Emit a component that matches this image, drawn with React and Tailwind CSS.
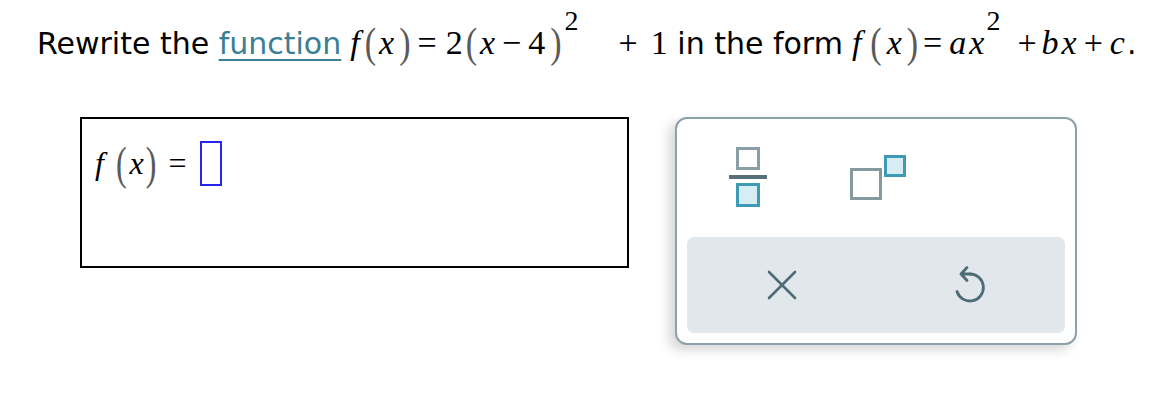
function FractionIcon() {
  return (
    <svg width="40" height="62" viewBox="0 0 40 62">
      <rect x="8.5" y="1.5" width="21" height="20" fill="#fff" stroke="#8a9ea6" strokeWidth="3" />
      <rect x="0" y="28" width="38" height="4" fill="#56707a" />
      <rect x="8.5" y="37.5" width="21" height="21" fill="#d6edf3" stroke="#3f9bb5" strokeWidth="3" />
    </svg>
  );
}

function SuperscriptIcon() {
  return (
    <svg width="58" height="46" viewBox="0 0 58 46">
      <rect x="1.5" y="14.5" width="29" height="29" fill="#fff" stroke="#86999f" strokeWidth="3" />
      <rect x="35.5" y="1.5" width="19" height="19" fill="#d6edf3" stroke="#3f9bb5" strokeWidth="3" />
    </svg>
  );
}

function ClearIcon() {
  return (
    <svg width="30" height="30" viewBox="0 0 30 30">
      <path d="M2 2 L28 28 M28 2 L2 28" stroke="#4c6c77" strokeWidth="2.6" strokeLinecap="round" />
    </svg>
  );
}

function UndoIcon() {
  return (
    <svg width="34" height="40" viewBox="0 0 34 40">
      <path
        d="M16 9 A13.5 13.5 0 1 1 3 26.5"
        fill="none"
        stroke="#4c6c77"
        strokeWidth="2.8"
        strokeLinecap="round"
      />
      <path
        d="M13 2.5 L7 9 L13 15.5 M7 9 L16 9"
        fill="none"
        stroke="#4c6c77"
        strokeWidth="2.8"
        strokeLinecap="round"
        strokeLinejoin="round"
      />
    </svg>
  );
}

export default function App() {
  return (
    <div className="w-[1174px] h-[406px] bg-white text-black">
      <div className="flex items-baseline pl-[37px] pt-[7px] h-[60px] whitespace-nowrap font-['DejaVu_Sans',sans-serif] text-[30px] leading-[44px]">
        <span>Rewrite the&nbsp;</span>
        <a className="text-[#3a7f94] underline decoration-[2px] underline-offset-[5px]">function</a>
        <span className="font-['Liberation_Serif','Times_New_Roman','DejaVu_Serif',serif] text-[34px] not-italic">
          <span className="italic ml-[9px]">f</span>
          <span className="inline-block text-[#5a5a5a] scale-y-[1.25] ml-[5px]">(</span>
          <span className="italic ml-[3px]">x</span>
          <span className="inline-block text-[#5a5a5a] scale-y-[1.25] ml-[5px]">)</span>
          <span className="ml-[7px]">=</span>
          <span className="ml-[9px]">2</span>
          <span className="inline-block text-[#5a5a5a] scale-y-[1.25] ml-[3px]">(</span>
          <span className="italic ml-[3px]">x</span>
          <span className="ml-[7px]">−</span>
          <span className="ml-[7px]">4</span>
          <span className="inline-block text-[#5a5a5a] scale-y-[1.25] ml-[5px]">)</span>
          <span className="inline-block text-[28px] leading-none align-[24px] ml-[3px]">2</span>
          <span className="ml-[40px]">+</span>
          <span className="ml-[13px]">1</span>
        </span>
        <span>&nbsp;in the form</span>
        <span className="font-['Liberation_Serif','Times_New_Roman','DejaVu_Serif',serif] text-[34px] not-italic">
          <span className="italic ml-[9px]">f</span>
          <span className="inline-block text-[#5a5a5a] scale-y-[1.25] ml-[9px]">(</span>
          <span className="italic ml-[5px]">x</span>
          <span className="inline-block text-[#5a5a5a] scale-y-[1.25] ml-[5px]">)</span>
          <span className="ml-[5px]">=</span>
          <span className="italic ml-[7px]">a</span>
          <span className="italic ml-[3px]">x</span>
          <span className="inline-block text-[28px] leading-none align-[24px] ml-[2px]">2</span>
          <span className="ml-[17px]">+</span>
          <span className="italic ml-[5px]">b</span>
          <span className="italic ml-[3px]">x</span>
          <span className="ml-[7px]">+</span>
          <span className="italic ml-[7px]">c</span>
        </span>
        <span className="ml-[2px]">.</span>
      </div>

      <div className="flex items-start pl-[80px] pt-[57px] gap-[46px]">
        <div className="w-[549px] h-[151px] border-2 border-black pl-[11px] pt-[20px]">
          <div className="flex items-center h-[48px] font-['Liberation_Serif','Times_New_Roman','DejaVu_Serif',serif] text-[32px]">
            <span className="italic ml-[2px]">f</span>
            <span className="inline-block text-[#5a5a5a] scale-y-[1.45] ml-[12px]">(</span>
            <span className="italic ml-[3px]">x</span>
            <span className="inline-block text-[#5a5a5a] scale-y-[1.45] ml-[2px]">)</span>
            <span className="ml-[12px]">=</span>
            <span className="ml-[14px] w-[22px] h-[45px] border-2 border-[#2525f0]" />
          </div>
        </div>

        <div className="w-[402px] h-[228px] rounded-[12px] border-2 border-[#8ca1a9] bg-white shadow-[-6px_5px_12px_rgba(0,0,0,0.16)] flex flex-col">
          <div className="flex-1 flex items-center pl-[7px]">
            <div className="w-[130px] flex justify-center">
              <FractionIcon />
            </div>
            <div className="w-[130px] flex justify-center">
              <SuperscriptIcon />
            </div>
          </div>
          <div className="mx-[10px] mb-[10px] h-[96px] rounded-[7px] bg-[#e1e7ea] grid grid-cols-2 items-center">
            <div className="flex justify-center">
              <ClearIcon />
            </div>
            <div className="flex justify-center">
              <UndoIcon />
            </div>
          </div>
        </div>
      </div>
    </div>
  );
}
